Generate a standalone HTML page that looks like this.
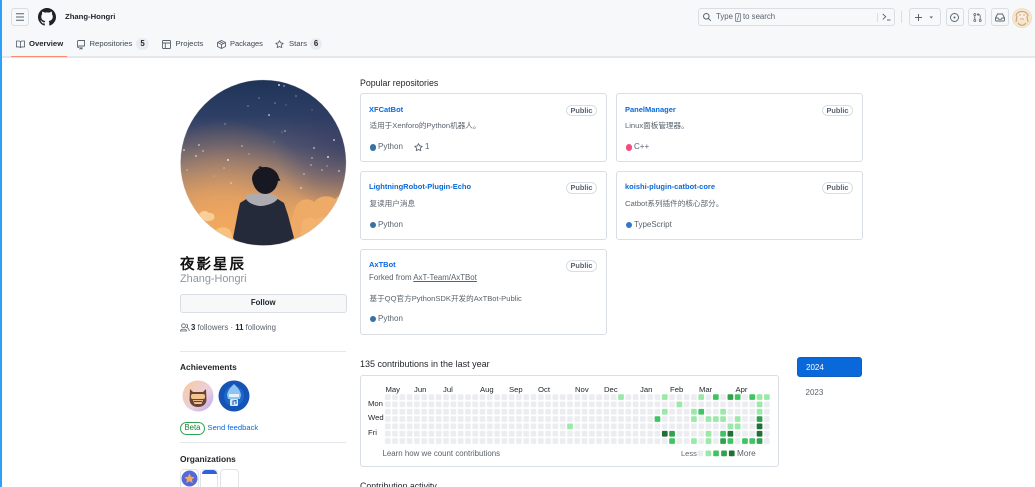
<!DOCTYPE html>
<html lang="zh"><head><meta charset="utf-8"><title>Zhang-Hongri</title>
<style>
html,body{margin:0;padding:0;width:1035px;height:487px;overflow:hidden;background:#fff}
body{position:relative;font-family:"Liberation Sans","Noto Sans CJK SC",sans-serif;font-size:7.8px;color:#1f2328}
.t{position:absolute;white-space:nowrap;line-height:12px}
.b{position:absolute;box-sizing:border-box}
.card{position:absolute;box-sizing:border-box;background:#fff;border:1px solid #d8dee4;border-radius:3px;width:247px}
.link{color:#0969da;font-weight:bold;font-size:7.5px}
.mut{color:#59636e}
.pub{position:absolute;box-sizing:border-box;width:31px;height:11.500px;border:1px solid #d8dee4;border-radius:6px;font-size:7.300px;line-height:9.500px;text-align:center;color:#59636e;font-weight:bold}
.dot{position:absolute;width:6.500px;height:6.500px;border-radius:50%}
.cnt{position:absolute;height:12px;border-radius:6px;background:#e8ebef;font-size:7.800px;line-height:12px;text-align:center;color:#1f2328;font-weight:bold}
.btn{position:absolute;box-sizing:border-box;border:1px solid #d8dee4;border-radius:3px;height:18px;top:8px}
.m{font-size:7.700px}
svg{position:absolute;overflow:visible}
</style></head><body>

<div class="b" style="left:0;top:0;width:1035px;height:56px;background:#f6f8fa"></div>
<div class="b" style="left:0;top:56px;width:1035px;height:1.500px;background:#e4e7eb"></div>
<div class="b" style="left:11px;top:55.500px;width:56px;height:1.500px;background:#fd8c73"></div>
<div class="b" style="left:0;top:0;width:2px;height:487px;background:#2ea0f5"></div>

<div class="btn" style="left:11px;width:18px"></div>
<svg style="left:16px;top:13px" width="8" height="8" viewBox="0 0 8 8"><path d="M0 .8H8M0 4H8M0 7.200H8" stroke="#59636e" stroke-width="1"/></svg>
<svg style="left:38px;top:8px" width="18" height="18" viewBox="0 0 16 16"><path fill="#1f2328" d="M8 0c4.420 0 8 3.580 8 8a8.013 8.013 0 0 1-5.450 7.590c-.4.080-.55-.17-.55-.38 0-.27.010-1.130.010-2.200 0-.75-.25-1.230-.54-1.480 1.780-.2 3.650-.88 3.650-3.950 0-.88-.31-1.590-.82-2.150.080-.2.360-1.020-.08-2.120 0 0-.67-.22-2.200.820-.64-.18-1.320-.27-2-.27-.68 0-1.360.090-2 .270-1.530-1.030-2.200-.82-2.200-.82-.44 1.100-.16 1.920-.08 2.120-.51.560-.82 1.280-.82 2.150 0 3.060 1.860 3.750 3.640 3.950-.23.200-.44.550-.51 1.070-.46.210-1.610.550-2.330-.66-.15-.24-.6-.83-1.230-.82-.67.010-.27.380.010.530.340.190.730.900.820 1.130.160.450.680 1.310 2.690.940 0 .670.010 1.300.010 1.490 0 .210-.15.450-.55.370A7.995 7.995 0 0 1 0 8c0-4.420 3.580-8 8-8Z"/></svg>
<div class="t" style="left:65px;top:11px;font-weight:bold;font-size:7.700px">Zhang-Hongri</div>

<svg style="left:16px;top:39.500px" width="9" height="9" viewBox="0 0 16 16"><path fill="#59636e" d="M0 1.750A.75.75 0 0 1 .75 1h4.253c1.227 0 2.317.59 3 1.501A3.743 3.743 0 0 1 11.006 1h4.245a.75.75 0 0 1 .75.75v10.500a.75.75 0 0 1-.75.75h-4.507a2.250 2.250 0 0 0-1.591.659l-.622.621a.75.75 0 0 1-1.060 0l-.622-.621A2.250 2.250 0 0 0 5.258 13H.75a.75.75 0 0 1-.75-.75Zm7.251 10.324.004-5.073-.002-2.253A2.250 2.250 0 0 0 5.003 2.500H1.500v9h3.757a3.750 3.750 0 0 1 1.994.574ZM8.755 4.750l-.004 7.322a3.752 3.752 0 0 1 1.992-.572H14.500v-9h-3.495a2.250 2.250 0 0 0-2.250 2.250Z"/></svg>
<div class="t" style="left:29px;top:38px;font-weight:bold;font-size:7.700px">Overview</div>
<svg style="left:77px;top:39.500px" width="8" height="9" viewBox="0 0 8 9"><path d="M7.500 6.500V.5H1.500A1 1 0 0 0 .5 1.500V6.700A1 1 0 0 1 1.500 6H7.500M.5 6.800A1 1 0 0 0 1.500 7.600H2M3 7V9L4 8.200 5 9V7" fill="none" stroke="#59636e" stroke-width=".9"/></svg>
<div class="t" style="left:89.500px;top:38px;color:#3f4852;font-size:7.700px">Repositories</div>
<div class="cnt" style="left:136px;top:38px;width:13px">5</div>
<svg style="left:162px;top:39.500px" width="9" height="9" viewBox="0 0 9 9"><path d="M1.200.5H7.800A.7.7 0 0 1 8.500 1.200V7.800A.7.7 0 0 1 7.800 8.500H1.200A.7.7 0 0 1 .5 7.800V1.200A.7.7 0 0 1 1.200.5ZM.5 3H8.500M3.300 3V8.500" fill="none" stroke="#59636e" stroke-width=".9"/></svg>
<div class="t" style="left:175.500px;top:38px;color:#3f4852;font-size:7.700px">Projects</div>
<svg style="left:217px;top:39.500px" width="9" height="9" viewBox="0 0 9 9"><path d="M4.500.5 8.500 2.500V6.500L4.500 8.500 .5 6.500V2.500ZM.5 2.500 4.500 4.500 8.500 2.500M4.500 4.500V8.500M2.500 1.500 6.500 3.500" fill="none" stroke="#59636e" stroke-width=".9"/></svg>
<div class="t" style="left:230px;top:38px;color:#3f4852;font-size:7.500px">Packages</div>
<svg style="left:275px;top:39.500px" width="9" height="9" viewBox="0 0 16 16"><path fill="#59636e" d="M8 .25a.75.75 0 0 1 .673.418l1.882 3.815 4.210.612a.75.75 0 0 1 .416 1.279l-3.046 2.970.719 4.192a.751.751 0 0 1-1.088.791L8 12.347l-3.766 1.980a.75.75 0 0 1-1.088-.79l.72-4.194L.818 6.374a.75.75 0 0 1 .416-1.280l4.210-.611L7.327.668A.75.75 0 0 1 8 .25Zm0 2.445L6.615 5.500a.75.75 0 0 1-.564.41l-3.097.45 2.240 2.184a.75.75 0 0 1 .216.664l-.528 3.084 2.769-1.456a.75.75 0 0 1 .698 0l2.770 1.456-.53-3.084a.75.75 0 0 1 .216-.664l2.240-2.183-3.096-.45a.75.75 0 0 1-.564-.41L8 2.694Z"/></svg>
<div class="t" style="left:289px;top:38px;color:#3f4852;font-size:7.700px">Stars</div>
<div class="cnt" style="left:310px;top:38px;width:12px">6</div>

<div class="btn" style="left:698px;width:196.500px"></div>
<svg style="left:703px;top:13px" width="8" height="8" viewBox="0 0 8 8"><circle cx="3.300" cy="3.300" r="2.800" fill="none" stroke="#59636e"/><path d="M5.300 5.300 7.800 7.800" stroke="#59636e"/></svg>
<div class="t mut" style="left:716px;top:11px">Type</div>
<div class="b" style="left:735px;top:12.500px;width:6px;height:9px;border:.8px solid #8c959f;border-radius:1.500px"></div>
<svg style="left:735px;top:12.500px" width="6" height="9"><path d="M2 7.500 4 1.500" stroke="#6e7781" stroke-width=".7"/></svg>
<div class="t mut" style="left:743px;top:11px">to search</div>
<div class="b" style="left:877px;top:13px;width:1px;height:9px;background:#d8dee4"></div>
<svg style="left:882px;top:13px" width="9" height="8" viewBox="0 0 9 8"><path d="M.7 1 3.700 3.700.7 6.400M5 7H8.500" fill="none" stroke="#59636e" stroke-width=".9"/></svg>
<div class="b" style="left:901px;top:11px;width:1px;height:12px;background:#d8dee4"></div>
<div class="btn" style="left:909px;width:32px"></div>
<svg style="left:914px;top:12.500px" width="9" height="9" viewBox="0 0 9 9"><path d="M4.500 1V8M1 4.500H8" stroke="#59636e" stroke-width="1"/></svg>
<svg style="left:929px;top:16px" width="5" height="3"><path d="M.5 .5H4L2.250 2.500Z" fill="#59636e"/></svg>
<div class="btn" style="left:945.500px;width:18px"></div>
<svg style="left:950px;top:12.500px" width="9" height="9" viewBox="0 0 9 9"><circle cx="4.500" cy="4.500" r="4" fill="none" stroke="#59636e" stroke-width=".9"/><circle cx="4.500" cy="4.500" r="1" fill="#59636e"/></svg>
<div class="btn" style="left:968px;width:18px"></div>
<svg style="left:972.500px;top:12.500px" width="9" height="9" viewBox="0 0 9 9"><circle cx="1.800" cy="1.500" r="1" fill="none" stroke="#59636e" stroke-width=".8"/><circle cx="1.800" cy="7.500" r="1" fill="none" stroke="#59636e" stroke-width=".8"/><circle cx="7.200" cy="7.500" r="1" fill="none" stroke="#59636e" stroke-width=".8"/><path d="M1.800 2.500V6.500M7.200 6.500V3A1.500 1.500 0 0 0 5.700 1.500H4.500M5.500 .3 4.300 1.500 5.500 2.700" fill="none" stroke="#59636e" stroke-width=".8"/></svg>
<div class="btn" style="left:990.500px;width:18.500px"></div>
<svg style="left:995px;top:12.500px" width="10" height="9" viewBox="0 0 10 9"><path d="M2.500 1H7.500L9.500 5V7.300A.7.7 0 0 1 8.800 8H1.200A.7.7 0 0 1 .5 7.300V5ZM.5 5H3L3.800 6.300H6.200L7 5H9.500" fill="none" stroke="#59636e" stroke-width=".9"/></svg>
<svg style="left:1012px;top:7.500px" width="20" height="20" viewBox="0 0 20 20"><circle cx="10" cy="10" r="9.500" fill="#f6e7c8" stroke="#e3d6c0" stroke-width=".6"/><circle cx="10" cy="8" r="4.500" fill="#f9ede0"/><path d="M4 8C5 2 15 2 16 8M5 8 4 14M15 8 16 14M6 15C8 18 12 18 14 15" fill="none" stroke="#d0a68a" stroke-width="1.200"/><path d="M7 7H9M11 7H13M8 11H12" stroke="#c08a74" stroke-width=".8"/></svg>

<!-- avatar -->
<svg style="left:170px;top:70px" width="190" height="190" viewBox="170 70 190 190">
<defs>
<linearGradient id="sky" x1="0" y1="0" x2="0" y2="1">
<stop offset="0" stop-color="#1f3359"/><stop offset=".22" stop-color="#2e3f65"/><stop offset=".40" stop-color="#54566f"/><stop offset=".55" stop-color="#8a7672"/><stop offset=".70" stop-color="#c99468"/><stop offset=".85" stop-color="#eca75f"/><stop offset="1" stop-color="#f6b76e"/>
</linearGradient>
<radialGradient id="glow" gradientUnits="userSpaceOnUse" cx="225" cy="215" r="95"><stop offset="0" stop-color="#f2a75e" stop-opacity=".75"/><stop offset="1" stop-color="#f2a75e" stop-opacity="0"/></radialGradient>
<radialGradient id="dark" gradientUnits="userSpaceOnUse" cx="345" cy="145" r="70"><stop offset="0" stop-color="#2f3560" stop-opacity=".55"/><stop offset="1" stop-color="#2f3560" stop-opacity="0"/></radialGradient>
<clipPath id="cc"><circle cx="263.300" cy="162.700" r="82.600"/></clipPath>
</defs>
<circle cx="263.300" cy="162.700" r="83" fill="#c9ccd1"/>
<g clip-path="url(#cc)">
<rect x="180" y="80" width="167" height="166" fill="url(#sky)"/>
<rect x="180" y="80" width="167" height="166" fill="url(#glow)"/>
<rect x="180" y="80" width="167" height="166" fill="url(#dark)"/>
<path d="M296 206C300 198 310 198 314 202 320 194 332 196 335 199 341 194 348 190 350 190V250H290C290 230 292 214 296 206Z" fill="#eeaa67"/>
<path d="M302 222C306 216 312 217 316 220 320 216 326 216 330 220L330 240 300 246Z" fill="#f3b36e"/>
<path d="M198 216C201 210 206 210 209 213 214 212 216 217 213 220 208 222 200 221 198 216Z" fill="#f9cf98"/>
<path d="M214 232C218 226 226 226 230 230L236 246H212Z" fill="#f9c27c"/>
<g fill="#fff">
<circle cx="279" cy="85" r=".9"/><circle cx="284" cy="86" r=".6"/><circle cx="259" cy="98" r=".5"/><circle cx="275" cy="103" r=".5"/><circle cx="269" cy="115" r=".8"/><circle cx="248" cy="106" r=".5"/><circle cx="296" cy="96" r=".5"/><circle cx="286" cy="105" r=".4"/><circle cx="312" cy="110" r=".4"/><circle cx="225" cy="124" r=".5"/><circle cx="285" cy="131" r=".6"/><circle cx="282" cy="132" r=".4"/><circle cx="334" cy="140" r=".8"/><circle cx="314" cy="148" r=".7"/><circle cx="199" cy="145" r=".7"/><circle cx="203" cy="151" r=".6"/><circle cx="184" cy="150" r=".8"/><circle cx="196" cy="156" r=".7"/><circle cx="228" cy="160" r=".9"/><circle cx="242" cy="146" r=".6"/><circle cx="249" cy="154" r=".5"/><circle cx="224" cy="168" r=".5"/><circle cx="312" cy="158" r=".6"/><circle cx="328" cy="157" r=".9"/><circle cx="322" cy="170" r=".6"/><circle cx="311" cy="165" r=".6"/><circle cx="339" cy="171" r=".7"/><circle cx="304" cy="174" r=".6"/><circle cx="231" cy="183" r=".6"/><circle cx="301" cy="188" r=".7"/><circle cx="187" cy="170" r=".5"/><circle cx="214" cy="176" r=".4"/><circle cx="327" cy="166" r=".5"/><circle cx="274" cy="142" r=".4"/>
</g>
<path d="M240 203 248 198H276L284 203 288 215 294 238 280 246H240L233 238 238 212Z" fill="#252a3b"/>
<path d="M245 197C249 193 256 194 262 194 270 194 276 194 278 198 276 203 266 206 260 206 252 205 247 202 245 197Z" fill="#aeabb1"/>
<path d="M252 179C252 172 258 167 265 167 272 167 278 172 279 178L280.500 180.500 278 181C277 188 272 194 265 194 258 194 253 187 252 179Z" fill="#171821"/>
<path d="M258 168 260 166 263 167.500Z" fill="#171821"/>
</g>
</svg>

<div class="t" style="left:180px;top:256.500px;font-size:14.500px;line-height:16px;font-weight:bold;color:#111;letter-spacing:2px;font-family:'Liberation Sans','WenQuanYi Zen Hei',sans-serif">夜影星辰</div>
<div class="t" style="left:180px;top:272px;font-size:10.900px;line-height:14px;color:#8d96a0">Zhang-Hongri</div>
<div class="b" style="left:180px;top:294px;width:166.500px;height:18.500px;background:#f6f8fa;border:1px solid #d8dee4;border-radius:3px;text-align:center;font-weight:bold;font-size:7.800px;line-height:16.500px">Follow</div>
<svg style="left:180px;top:323px" width="10" height="9" viewBox="0 0 10 9"><circle cx="3.500" cy="2.700" r="1.900" fill="none" stroke="#59636e" stroke-width=".8"/><path d="M.5 8C.7 5.500 6.300 5.500 6.500 8ZM6.300 1A1.800 1.800 0 0 1 6.500 4.400C8 4.700 9 6 9.300 8" fill="none" stroke="#59636e" stroke-width=".8"/></svg>
<div class="t mut" style="left:191px;top:321.500px"><b style="color:#1f2328">3</b> followers · <b style="color:#1f2328">11</b> following</div>

<div class="b" style="left:180px;top:351px;width:166px;height:1px;background:#e4e7eb"></div>
<div class="t" style="left:180px;top:361px;font-weight:bold;font-size:8.400px">Achievements</div>
<svg style="left:182px;top:380px" width="68" height="32" viewBox="0 0 68 32">
<defs><linearGradient id="bg1" x1="0" y1="0" x2="1" y2="1"><stop offset="0" stop-color="#fbc99c"/><stop offset=".6" stop-color="#e9cfe0"/><stop offset="1" stop-color="#b5a5ee"/></linearGradient></defs>
<circle cx="16" cy="16" r="15.500" fill="url(#bg1)"/>
<path d="M8 9 11 12H21L24 9 24.500 20C24 25 20 27 16 27 12 27 8 25 7.500 20Z" fill="#6a4632"/>
<rect x="9" y="14" width="14" height="5" rx="2" fill="#f4c58e"/><path d="M11 20H21L19.500 24H12.500Z" fill="#f3c59a"/><path d="M12 21.500H20" stroke="#7c3a2a" stroke-width="1.200"/>
<circle cx="52" cy="16" r="15.500" fill="#1553b5"/>
<circle cx="52" cy="16" r="10" fill="#1c66cc"/>
<path d="M45 15C46 9 50 6 52 4 54 6 58 9 59 15L58 19H46Z" fill="#8fc4f0"/>
<path d="M47 14H57V17H47Z" fill="#e6f2fb"/><rect x="48" y="19" width="8" height="7" rx="1" fill="#d4e8f8"/><path d="M51 25V21L54 20.500V24" fill="none" stroke="#1553b5" stroke-width="1"/>
</svg>
<div class="b" style="left:180px;top:422px;width:25px;height:12.500px;border:1px solid #2da44e;border-radius:6.500px;color:#1a7f37;font-size:7.800px;line-height:10.500px;text-align:center">Beta</div>
<div class="t" style="left:207.500px;top:422px;color:#0969da;font-size:7.600px">Send feedback</div>
<div class="b" style="left:180px;top:442px;width:166px;height:1px;background:#e4e7eb"></div>
<div class="t" style="left:180px;top:453px;font-weight:bold;font-size:8.400px">Organizations</div>
<div class="b" style="left:180px;top:469px;width:18.500px;height:24px;border:1px solid #e1e5ea;border-radius:4px;background:#fff"></div>
<svg style="left:181px;top:470px" width="17" height="17" viewBox="0 0 17 17"><circle cx="8.500" cy="8.500" r="8" fill="#5468d8"/><path d="M8.500 3.500 10 6.800 13.500 7.200 11 9.600 11.700 13 8.500 11.300 5.300 13 6 9.600 3.500 7.200 7 6.800Z" fill="#f4a95c"/></svg>
<div class="b" style="left:200px;top:469px;width:18px;height:24px;border:1px solid #e1e5ea;border-radius:4px;background:#fff"></div>
<div class="b" style="left:201.500px;top:470px;width:15px;height:4px;background:#2f62d8;border-radius:8px 8px 0 0"></div>
<div class="b" style="left:220px;top:469px;width:19px;height:24px;border:1px solid #e1e5ea;border-radius:4px;background:#fff"></div>

<div class="t" style="left:360px;top:76.500px;font-size:8.800px">Popular repositories</div>

<div class="card" style="left:359.500px;top:93.300px;height:69px"></div>
<div class="t link" style="left:369px;top:103.500px">XFCatBot</div>
<div class="pub" style="left:566px;top:104.500px">Public</div>
<div class="t mut" style="left:369.500px;top:120px;font-size:7.600px">适用于Xenforo的Python机器人。</div>
<div class="dot" style="left:369.500px;top:144px;background:#3572a5"></div>
<div class="t mut" style="left:378px;top:141px;font-size:8px">Python</div>
<svg style="left:414px;top:143px" width="9" height="9" viewBox="0 0 16 16"><path fill="#59636e" d="M8 .25a.75.75 0 0 1 .673.418l1.882 3.815 4.210.612a.75.75 0 0 1 .416 1.279l-3.046 2.970.719 4.192a.751.751 0 0 1-1.088.791L8 12.347l-3.766 1.980a.75.75 0 0 1-1.088-.79l.72-4.194L.818 6.374a.75.75 0 0 1 .416-1.280l4.210-.611L7.327.668A.75.75 0 0 1 8 .25Zm0 2.445L6.615 5.500a.75.75 0 0 1-.564.41l-3.097.45 2.240 2.184a.75.75 0 0 1 .216.664l-.528 3.084 2.769-1.456a.75.75 0 0 1 .698 0l2.770 1.456-.53-3.084a.75.75 0 0 1 .216-.664l2.240-2.183-3.096-.45a.75.75 0 0 1-.564-.41L8 2.694Z"/></svg>
<div class="t mut" style="left:425px;top:141px;font-size:8px">1</div>

<div class="card" style="left:615.700px;top:93.300px;height:69px"></div>
<div class="t link" style="left:625px;top:103.500px">PanelManager</div>
<div class="pub" style="left:822px;top:104.500px">Public</div>
<div class="t mut" style="left:625px;top:120px;font-size:7.600px">Linux面板管理器。</div>
<div class="dot" style="left:625.500px;top:144px;background:#f34b7d"></div>
<div class="t mut" style="left:634px;top:141px;font-size:8px">C++</div>

<div class="card" style="left:359.500px;top:171.300px;height:68.500px"></div>
<div class="t link" style="left:369px;top:181px">LightningRobot-Plugin-Echo</div>
<div class="pub" style="left:566px;top:182px">Public</div>
<div class="t mut" style="left:369.500px;top:198px;font-size:7.600px">复读用户消息</div>
<div class="dot" style="left:369.500px;top:221.500px;background:#3572a5"></div>
<div class="t mut" style="left:378px;top:219px;font-size:8px">Python</div>

<div class="card" style="left:615.700px;top:171.300px;height:68.500px"></div>
<div class="t link" style="left:625px;top:181px">koishi-plugin-catbot-core</div>
<div class="pub" style="left:822px;top:182px">Public</div>
<div class="t mut" style="left:625px;top:198px;font-size:7.600px">Catbot系列插件的核心部分。</div>
<div class="dot" style="left:625.500px;top:221.500px;background:#3178c6"></div>
<div class="t mut" style="left:634px;top:219px;font-size:8px">TypeScript</div>

<div class="card" style="left:359.500px;top:249px;height:85.500px"></div>
<div class="t link" style="left:369px;top:259px">AxTBot</div>
<div class="pub" style="left:566px;top:260px">Public</div>
<div class="t mut" style="left:369px;top:271.500px;font-size:7.900px">Forked from <span style="text-decoration:underline">AxT-Team/AxTBot</span></div>
<div class="t mut" style="left:369.500px;top:292.500px;font-size:7.600px">基于QQ官方PythonSDK开发的AxTBot-Public</div>
<div class="dot" style="left:369.500px;top:315.500px;background:#3572a5"></div>
<div class="t mut" style="left:378px;top:313px;font-size:8px">Python</div>

<div class="t" style="left:360px;top:358px;font-size:9px">135 contributions in the last year</div>
<div class="b" style="left:359.500px;top:375px;width:419px;height:92px;border:1px solid #d8dee4;border-radius:3px"></div>

<div class="t m" style="left:385.500px;top:384px">May</div>
<div class="t m" style="left:414px;top:384px">Jun</div>
<div class="t m" style="left:443px;top:384px">Jul</div>
<div class="t m" style="left:480px;top:384px">Aug</div>
<div class="t m" style="left:509px;top:384px">Sep</div>
<div class="t m" style="left:538px;top:384px">Oct</div>
<div class="t m" style="left:575px;top:384px">Nov</div>
<div class="t m" style="left:604px;top:384px">Dec</div>
<div class="t m" style="left:640px;top:384px">Jan</div>
<div class="t m" style="left:670px;top:384px">Feb</div>
<div class="t m" style="left:699px;top:384px">Mar</div>
<div class="t m" style="left:735.500px;top:384px">Apr</div>
<div class="t m" style="left:368px;top:397.500px">Mon</div>
<div class="t m" style="left:368px;top:412px">Wed</div>
<div class="t m" style="left:368px;top:426.500px">Fri</div>

<svg style="left:0;top:0" width="1035" height="487" viewBox="0 0 1035 487">
<defs><pattern id="cell" x="384.900" y="394.200" width="7.290" height="7.333" patternUnits="userSpaceOnUse"><rect width="5.700" height="5.700" rx="1" fill="#ebedf0"/></pattern></defs>
<rect x="384.900" y="394.200" width="385" height="51" fill="url(#cell)"/>
<g fill="#9be9a8">
<rect x="618.18" y="394.2" width="5.7" height="5.7" rx="1"/><rect x="661.92" y="394.2" width="5.7" height="5.7" rx="1"/><rect x="698.37" y="394.2" width="5.7" height="5.7" rx="1"/><rect x="756.69" y="394.2" width="5.7" height="5.7" rx="1"/><rect x="763.98" y="394.2" width="5.7" height="5.7" rx="1"/>
<rect x="676.5" y="401.5" width="5.7" height="5.7" rx="1"/><rect x="756.69" y="401.5" width="5.7" height="5.7" rx="1"/>
<rect x="661.92" y="408.9" width="5.7" height="5.7" rx="1"/><rect x="691.08" y="408.9" width="5.7" height="5.7" rx="1"/><rect x="720.24" y="408.9" width="5.7" height="5.7" rx="1"/><rect x="756.69" y="408.9" width="5.7" height="5.7" rx="1"/>
<rect x="691.08" y="416.2" width="5.7" height="5.7" rx="1"/><rect x="705.66" y="416.2" width="5.7" height="5.7" rx="1"/><rect x="712.95" y="416.2" width="5.7" height="5.7" rx="1"/><rect x="720.24" y="416.2" width="5.7" height="5.7" rx="1"/><rect x="734.82" y="416.2" width="5.7" height="5.7" rx="1"/>
<rect x="567.15" y="423.5" width="5.7" height="5.7" rx="1"/><rect x="727.53" y="423.5" width="5.7" height="5.7" rx="1"/><rect x="734.82" y="423.5" width="5.7" height="5.7" rx="1"/>
<rect x="705.66" y="430.9" width="5.7" height="5.7" rx="1"/>
<rect x="691.08" y="438.2" width="5.7" height="5.7" rx="1"/><rect x="705.66" y="438.2" width="5.7" height="5.7" rx="1"/>
<rect x="705.5" y="450.5" width="5.7" height="5.7" rx="1"/>
</g>
<g fill="#40c463">
<rect x="712.95" y="394.2" width="5.7" height="5.7" rx="1"/><rect x="734.82" y="394.2" width="5.7" height="5.7" rx="1"/><rect x="749.4" y="394.2" width="5.7" height="5.7" rx="1"/>
<rect x="698.37" y="408.9" width="5.7" height="5.7" rx="1"/>
<rect x="654.63" y="416.2" width="5.7" height="5.7" rx="1"/>
<rect x="720.24" y="430.9" width="5.7" height="5.7" rx="1"/>
<rect x="669.21" y="438.2" width="5.7" height="5.7" rx="1"/><rect x="727.53" y="438.2" width="5.7" height="5.7" rx="1"/><rect x="742.11" y="438.2" width="5.7" height="5.7" rx="1"/><rect x="749.4" y="438.2" width="5.7" height="5.7" rx="1"/>
<rect x="713.2" y="450.5" width="5.7" height="5.7" rx="1"/>
</g>
<g fill="#30a14e">
<rect x="727.53" y="394.2" width="5.7" height="5.7" rx="1"/>
<rect x="756.69" y="416.2" width="5.7" height="5.7" rx="1"/>
<rect x="669.21" y="430.9" width="5.7" height="5.7" rx="1"/>
<rect x="720.24" y="438.2" width="5.7" height="5.7" rx="1"/><rect x="756.69" y="438.2" width="5.7" height="5.7" rx="1"/>
<rect x="721.2" y="450.5" width="5.7" height="5.7" rx="1"/>
</g>
<g fill="#216e39">
<rect x="756.69" y="423.5" width="5.7" height="5.7" rx="1"/>
<rect x="661.92" y="430.9" width="5.7" height="5.7" rx="1"/><rect x="727.53" y="430.9" width="5.7" height="5.7" rx="1"/><rect x="756.69" y="430.9" width="5.7" height="5.7" rx="1"/>
<rect x="728.9" y="450.5" width="5.7" height="5.7" rx="1"/>
</g>
<rect x="697.5" y="450.5" width="5.7" height="5.7" rx="1" fill="#ebedf0"/>
</svg>

<div class="t mut" style="left:382.500px;top:447.500px;font-size:7.900px">Learn how we count contributions</div>
<div class="t mut" style="left:681px;top:447.500px;font-size:7.500px">Less</div>
<div class="t mut" style="left:737px;top:447.500px;font-size:8.200px">More</div>

<div class="b" style="left:796.500px;top:356.700px;width:65.500px;height:20.800px;background:#0969da;border:1px solid #0f5fc0;border-radius:3px;color:#fff;font-size:8px;line-height:19px;padding-left:8.500px">2024</div>
<div class="t mut" style="left:805.500px;top:386.500px;font-size:8px">2023</div>

<div class="t" style="left:360px;top:480px;font-size:8.800px">Contribution activity</div>
</body></html>
